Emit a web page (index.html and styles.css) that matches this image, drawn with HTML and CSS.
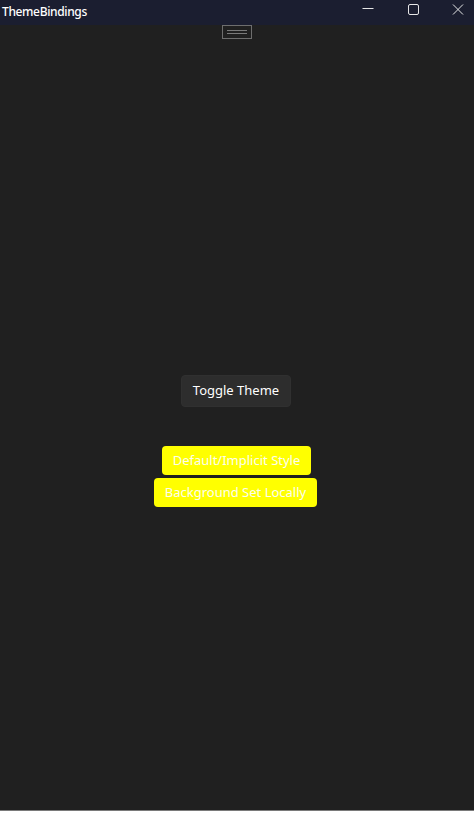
FILE: index.html
```html
<!DOCTYPE html>
<html>
<head>
<meta charset="utf-8">
<link rel="stylesheet" href="styles.css">
</head>
<body>
<div class="window">
  <div class="titlebar">
    <span class="title">ThemeBindings</span>
    <div class="controls">
      <svg class="ctl" width="12" height="12" viewBox="0 0 12 12"><path d="M0.5 4.5H11.5" stroke="#e6e6e6" stroke-width="1"/></svg>
      <svg class="ctl" width="12" height="12" viewBox="0 0 12 12"><rect x="1.5" y="0.5" width="10" height="10" rx="1.5" fill="none" stroke="#e6e6e6" stroke-width="1"/></svg>
      <svg class="ctl" width="12" height="12" viewBox="0 0 12 12"><path d="M1 0.5L11 10.5M11 0.5L1 10.5" stroke="#e6e6e6" stroke-width="1"/></svg>
    </div>
  </div>
  <div class="content">
    <div class="handle"><div class="handle-bar"></div></div>
    <button class="toggle">Toggle Theme</button>
    <button class="yellow first">Default/Implicit Style</button>
    <button class="yellow second">Background Set Locally</button>
  </div>
  <div class="footer"></div>
</div>
</body>
</html>
```
FILE: styles.css
```css
html, body {
  margin: 0;
  padding: 0;
  background: #ffffff;
}
.window {
  width: 474px;
  height: 833px;
  display: flex;
  flex-direction: column;
  font-family: "Segoe UI", "Noto Sans", sans-serif;
}
.titlebar {
  height: 25px;
  background: #1b1e30;
  display: flex;
  align-items: center;
  justify-content: space-between;
}
.title {
  color: #ffffff;
  font-size: 12px;
  font-weight: 500;
  padding-left: 2px;
  padding-bottom: 3px;
  letter-spacing: -0.35px;
}
.controls {
  display: flex;
  align-items: center;
  gap: 33px;
  padding-right: 10px;
  padding-bottom: 5px;
}
.ctl {
  display: block;
}
.content {
  height: 786px;
  background: #202020;
  display: flex;
  flex-direction: column;
  align-items: center;
  padding-right: 2px;
  box-sizing: border-box;
  border-bottom: 1px solid #7a7a7a;
}
.handle {
  width: 28px;
  height: 12px;
  border: 1px solid #6e6e6e;
  display: flex;
  align-items: center;
  justify-content: center;
  margin-left: 1px;
}
.handle-bar {
  width: 20px;
  height: 2px;
  border-top: 1px solid #7a7a7a;
  border-bottom: 1px solid #7a7a7a;
}
button {
  font-family: "Segoe UI", "Noto Sans", sans-serif;
  font-size: 13px;
  border-radius: 4px;
  cursor: default;
}
.toggle {
  margin-top: 336px;
  width: 110px;
  height: 32px;
  background: #2d2d2d;
  border: 1px solid #303030;
  color: #ffffff;
  padding: 0 0 2px;
}
.yellow {
  background: #ffff00;
  border: none;
  color: #fdfdf0;
  height: 29px;
  padding: 0 0 1px;
}
.first {
  margin-top: 39px;
  width: 149px;
  margin-left: 1px;
}
.second {
  margin-top: 3px;
  width: 163px;
  margin-right: 1px;
}
.footer {
  flex: 1;
  background: #ffffff;
}
```
